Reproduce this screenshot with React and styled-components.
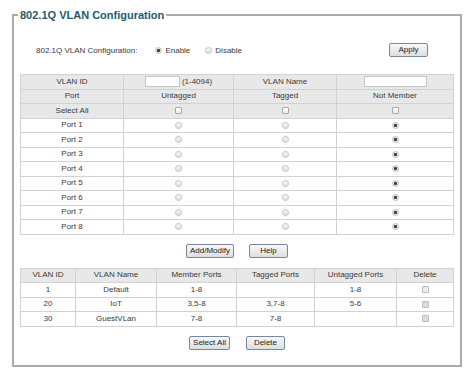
import React from 'react';
import styled, { createGlobalStyle } from 'styled-components';

const GlobalStyle = createGlobalStyle`
  html, body {
    margin: 0;
    padding: 0;
    background: #fff;
  }
  body {
    font-family: "Liberation Sans", Arial, sans-serif;
    font-size: 8px;
    color: #3a3a3a;
  }
`;

const PORTS = [1, 2, 3, 4, 5, 6, 7, 8];

const VLANS = [
  { id: 1, name: 'Default', member: '1-8', tagged: '', untagged: '1-8', locked: true },
  { id: 20, name: 'IoT', member: '3,5-8', tagged: '3,7-8', untagged: '5-6' },
  { id: 30, name: 'GuestVLan', member: '7-8', tagged: '7-8', untagged: '' },
];

const App = () => {
  return (
    <>
      <GlobalStyle />
      <Panel>
        <Title>802.1Q VLAN Configuration</Title>
        <Inner>
          <ConfigRow>
            <span>802.1Q VLAN Configuration:</span>
            <Choice $first>
              <Radio $checked />
              <span>Enable</span>
            </Choice>
            <Choice>
              <Radio />
              <span>Disable</span>
            </Choice>
            <ApplyButton>Apply</ApplyButton>
          </ConfigRow>

          <Grid>
            <colgroup>
              <col style={{ width: 103 }} />
              <col style={{ width: 110 }} />
              <col style={{ width: 103 }} />
              <col style={{ width: 117 }} />
            </colgroup>
            <tbody>
              <tr>
                <HeadCell>VLAN ID</HeadCell>
                <HeadCell>
                  <IdWrap>
                    <TextBox $w={35} />
                    <span>(1-4094)</span>
                  </IdWrap>
                </HeadCell>
                <HeadCell>VLAN Name</HeadCell>
                <HeadCell>
                  <TextBox $w={63} />
                </HeadCell>
              </tr>
              <tr>
                <HeadCell>Port</HeadCell>
                <HeadCell>Untagged</HeadCell>
                <HeadCell>Tagged</HeadCell>
                <HeadCell>Not Member</HeadCell>
              </tr>
              <tr>
                <HeadCell>Select All</HeadCell>
                <HeadCell><Check /></HeadCell>
                <HeadCell><Check /></HeadCell>
                <HeadCell><Check /></HeadCell>
              </tr>
              {PORTS.map((p) => (
                <tr key={p}>
                  <Cell>Port {p}</Cell>
                  <Cell><Radio /></Cell>
                  <Cell><Radio /></Cell>
                  <Cell><Radio $checked /></Cell>
                </tr>
              ))}
            </tbody>
          </Grid>

          <ButtonRow>
            <Button>Add/Modify</Button>
            <Button>Help</Button>
          </ButtonRow>

          <Grid>
            <colgroup>
              <col style={{ width: 55 }} />
              <col style={{ width: 81 }} />
              <col style={{ width: 80 }} />
              <col style={{ width: 78 }} />
              <col style={{ width: 82 }} />
              <col style={{ width: 57 }} />
            </colgroup>
            <tbody>
              <tr>
                <HeadCell>VLAN ID</HeadCell>
                <HeadCell>VLAN Name</HeadCell>
                <HeadCell>Member Ports</HeadCell>
                <HeadCell>Tagged Ports</HeadCell>
                <HeadCell>Untagged Ports</HeadCell>
                <HeadCell>Delete</HeadCell>
              </tr>
              {VLANS.map((v) => (
                <tr key={v.id}>
                  <Cell>{v.id}</Cell>
                  <Cell>{v.name}</Cell>
                  <Cell>{v.member}</Cell>
                  <Cell>{v.tagged}</Cell>
                  <Cell>{v.untagged}</Cell>
                  <Cell><Check $disabled $light={v.locked} /></Cell>
                </tr>
              ))}
            </tbody>
          </Grid>

          <ButtonRow $bottom>
            <Button>Select All</Button>
            <Button>Delete</Button>
          </ButtonRow>
        </Inner>
      </Panel>
    </>
  );
};

const Panel = styled.fieldset`
  box-sizing: border-box;
  width: 450px;
  margin: 8px 0 0 12px;
  padding: 0;
  border: 2px solid #ababab;
  min-width: 0;
`;

const Title = styled.legend`
  margin-left: 4px;
  padding: 0 2px;
  font-size: 11px;
  line-height: 14px;
  font-weight: bold;
  color: #1d5c6b;
`;

const Inner = styled.div`
  padding: 20px 7px 15px 6px;
`;

const ConfigRow = styled.div`
  display: flex;
  align-items: center;
  height: 16px;
  margin-bottom: 16px;
  padding: 0 25px 0 16px;
`;

const Choice = styled.label`
  display: flex;
  align-items: center;
  gap: 3px;
  margin-left: ${(p) => (p.$first ? '18px' : '15px')};
`;

const Radio = styled.span`
  display: inline-block;
  box-sizing: border-box;
  width: 7px;
  height: 7px;
  border-radius: 50%;
  border: 1px solid #c2c2c2;
  background: ${(p) =>
    p.$checked
      ? 'radial-gradient(circle, #3c3c3c 0 1.3px, #e2e2e2 1.8px)'
      : 'linear-gradient(#f8f8f8, #e0e0e0)'};
  vertical-align: middle;
`;

const Check = styled.span`
  display: inline-block;
  box-sizing: border-box;
  width: 7px;
  height: 7px;
  border-radius: 1px;
  border: 1px solid ${(p) => (p.$disabled ? '#bdbdbd' : '#a8a8a8')};
  background: ${(p) =>
    p.$disabled
      ? p.$light
        ? '#eeeeee'
        : '#dcdcdc'
      : 'linear-gradient(#fdfdfd, #eeeeee)'};
  vertical-align: middle;
`;

const Button = styled.button`
  box-sizing: border-box;
  min-width: 39px;
  height: 14px;
  padding: 0 3px;
  font-family: "Liberation Sans", Arial, sans-serif;
  font-size: 8px;
  line-height: 12px;
  color: #222;
  border: 1px solid #7688a0;
  border-radius: 2px;
  background: linear-gradient(#f8f8f8, #dedede);
`;

const ApplyButton = styled(Button)`
  margin-left: auto;
`;

const ButtonRow = styled.div`
  display: flex;
  justify-content: center;
  gap: ${(p) => (p.$bottom ? '16px' : '15px')};
  margin: 9px 0 ${(p) => (p.$bottom ? '0' : '10px')};
  padding-left: 1px;
`;

const Grid = styled.table`
  table-layout: fixed;
  width: 433px;
  border-collapse: collapse;
`;

const Cell = styled.td`
  height: 13.5px;
  padding: 0;
  border: 1px solid #d2d2d2;
  text-align: center;
  vertical-align: middle;
  line-height: 12px;
  white-space: nowrap;
`;

const HeadCell = styled(Cell)`
  background: #e8e8e8;
`;

const IdWrap = styled.div`
  display: flex;
  align-items: center;
  justify-content: center;
  gap: 2px;
`;

const TextBox = styled.span`
  display: inline-block;
  box-sizing: border-box;
  width: ${(p) => p.$w}px;
  height: 11px;
  background: #fff;
  border: 1px solid #bcc6d1;
  vertical-align: middle;
`;

export default App;
